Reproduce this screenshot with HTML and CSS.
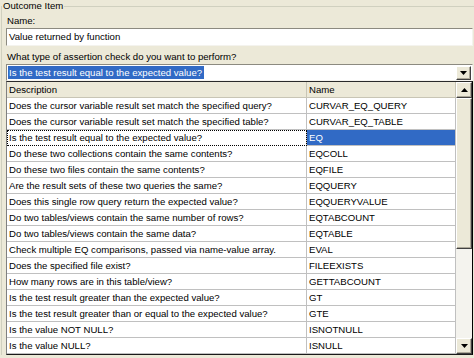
FILE: index.html
```html
<!DOCTYPE html>
<html lang="en">
<head>
  <meta charset="UTF-8">
  <meta name="viewport" content="width=device-width, initial-scale=1.0">
  <title>Outcome Item</title>
  <link rel="stylesheet" href="styles.css">
</head>
<body>
  <fieldset class="group">
    <legend>Outcome Item</legend>

    <label class="field-label">Name:</label>
    <div class="textbox">Value returned by function</div>

    <label class="field-label">What type of assertion check do you want to perform?</label>
    <div class="combo">
      <span class="combo-value">Is the test result equal to the expected value?</span>
      <span class="btn combo-btn">
        <svg width="7" height="4" viewBox="0 0 7 4"><path d="M0 0h7L3.5 4z" fill="#000"/></svg>
      </span>
    </div>

    <!-- Assertion list -->
    <div class="grid">
      <div class="grid-body">
        <div class="row header">
          <div class="cell">Description</div>
          <div class="cell">Name</div>
        </div>
        <div class="row"><div class="cell">Does the cursor variable result set match the specified query?</div><div class="cell">CURVAR_EQ_QUERY</div></div>
        <div class="row"><div class="cell">Does the cursor variable result set match the specified table?</div><div class="cell">CURVAR_EQ_TABLE</div></div>
        <div class="row selected"><div class="cell focus">Is the test result equal to the expected value?</div><div class="cell">EQ</div></div>
        <div class="row"><div class="cell">Do these two collections contain the same contents?</div><div class="cell">EQCOLL</div></div>
        <div class="row"><div class="cell">Do these two files contain the same contents?</div><div class="cell">EQFILE</div></div>
        <div class="row"><div class="cell">Are the result sets of these two queries the same?</div><div class="cell">EQQUERY</div></div>
        <div class="row"><div class="cell">Does this single row query return the expected value?</div><div class="cell">EQQUERYVALUE</div></div>
        <div class="row"><div class="cell">Do two tables/views contain the same number of rows?</div><div class="cell">EQTABCOUNT</div></div>
        <div class="row"><div class="cell">Do two tables/views contain the same data?</div><div class="cell">EQTABLE</div></div>
        <div class="row"><div class="cell">Check multiple EQ comparisons, passed via name-value array.</div><div class="cell">EVAL</div></div>
        <div class="row"><div class="cell">Does the specified file exist?</div><div class="cell">FILEEXISTS</div></div>
        <div class="row"><div class="cell">How many rows are in this table/view?</div><div class="cell">GETTABCOUNT</div></div>
        <div class="row"><div class="cell">Is the test result greater than the expected value?</div><div class="cell">GT</div></div>
        <div class="row"><div class="cell">Is the test result greater than or equal to the expected value?</div><div class="cell">GTE</div></div>
        <div class="row"><div class="cell">Is the value NOT NULL?</div><div class="cell">ISNOTNULL</div></div>
        <div class="row"><div class="cell">Is the value NULL?</div><div class="cell">ISNULL</div></div>
      </div>

      <div class="vscroll">
        <span class="btn scroll-btn">
          <svg width="7" height="4" viewBox="0 0 7 4"><path d="M0 4h7L3.5 0z" fill="#000"/></svg>
        </span>
        <span class="btn thumb"></span>
        <span class="track"></span>
        <span class="btn scroll-btn">
          <svg width="7" height="4" viewBox="0 0 7 4"><path d="M0 0h7L3.5 4z" fill="#000"/></svg>
        </span>
      </div>
    </div>
  </fieldset>
</body>
</html>
```

FILE: styles.css
```css
body {
  margin: 0;
  background: #ece9d8;
  font-family: "Liberation Sans", Arial, sans-serif;
  font-size: 9.6px;
  color: #000;
  overflow: hidden;
}

.group {
  margin: 0 0 0 1px;
  padding: 0 0 0 4px;
  border: 1px solid #d0d0bf;
  border-right: none;
  border-bottom: none;
  min-width: 0;
}

.group legend {
  margin-left: -4px;
  padding: 0 1px;
  line-height: 12px;
}

.field-label {
  display: block;
  line-height: 13px;
  margin-top: 2px;
  padding-left: 1px;
}

.field-label + .textbox {
  margin-top: 1px;
}

.textbox + .field-label {
  margin-top: 4px;
}

.textbox,
.combo,
.grid {
  box-sizing: border-box;
  width: 467px;
}

.textbox {
  height: 18px;
  line-height: 16px;
  padding-left: 2px;
  background: #fff;
  border: 1px solid;
  border-color: #8c8a80 #f4f3ee #f4f3ee #8c8a80;
}

.combo {
  display: flex;
  align-items: center;
  justify-content: space-between;
  height: 17px;
  margin-top: 1px;
  padding-left: 1px;
  background: #fff;
  border: 1px solid;
  border-color: #8c8a80 #f4f3ee #f4f3ee #8c8a80;
}

.combo-value {
  height: 13px;
  line-height: 13px;
  padding: 0 2px 0 1px;
  background: #316ac5;
  color: #fff;
}

.btn {
  display: flex;
  align-items: center;
  justify-content: center;
  box-sizing: border-box;
  background: #ece9d8;
  border: 1px solid;
  border-color: #fff #404040 #404040 #fff;
  box-shadow: inset -1px -1px 0 #aca899;
}

.combo-btn {
  width: 15px;
  height: 14px;
  margin-right: 1px;
}

.grid {
  display: flex;
  background: #fff;
  border: 1px solid;
  border-color: #2a2a2a #000 #1a1a1a #808080;
}

.grid-body {
  flex: 1;
}

.row {
  display: grid;
  grid-template-columns: 300px 149px;
  height: 16px;
}

.cell {
  box-sizing: border-box;
  padding-left: 2px;
  line-height: 15px;
  white-space: nowrap;
  overflow: hidden;
  border-right: 1px solid #c0c0c0;
  border-bottom: 1px solid #c0c0c0;
}

.header .cell {
  background: #ece9d8;
  border-color: #c8c5b5;
}

.selected .cell + .cell {
  background: #316ac5;
  color: #fff;
}

.cell.focus {
  outline: 1px dotted #000;
  outline-offset: -1px;
  border-bottom-color: transparent;
}

.vscroll {
  display: flex;
  flex-direction: column;
  width: 16px;
}

.scroll-btn {
  height: 16px;
}

.thumb {
  height: 151px;
}

.track {
  flex: 1;
  background: #f4f3ee;
}
```
